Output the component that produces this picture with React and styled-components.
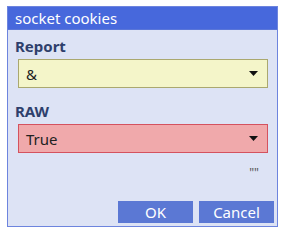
import React from 'react';
import styled, { createGlobalStyle } from 'styled-components';

const GlobalStyle = createGlobalStyle`
  html, body {
    margin: 0;
    padding: 0;
    background: #ffffff;
  }
  body {
    font-family: "Noto Sans", "Open Sans", sans-serif;
  }
`;

const Page = styled.div`
  width: 283px;
  height: 233px;
  padding: 6px 0 0 7px;
  box-sizing: border-box;
`;

const Dialog = styled.div`
  width: 271px;
  height: 221px;
  box-sizing: border-box;
  border: 1px solid #6d84de;
  background: #dde3f5;
  display: flex;
  flex-direction: column;
`;

const TitleBar = styled.div`
  height: 22px;
  background: #4768dc;
  color: #ffffff;
  font-size: 15px;
  line-height: 22px;
  padding-left: 7px;
  border-bottom: 1px solid #5a76d8;
`;

const Body = styled.div`
  flex: 1;
  display: flex;
  flex-direction: column;
  padding: 6px 9px 3px 10px;
`;

const Label = styled.div`
  font-size: 15px;
  font-weight: 700;
  color: #2e3f6c;
  line-height: 20px;
  margin-left: -3px;
  margin-bottom: 3px;
`;

const Select = styled.div`
  height: 29px;
  box-sizing: border-box;
  display: flex;
  align-items: center;
  justify-content: space-between;
  padding: 0 9px 0 7px;
  font-size: 15px;
  color: #222222;
  background: ${(p) => p.bg};
  border: 1px solid ${(p) => p.line};
  margin-bottom: ${(p) => p.gap}px;
`;

const Caret = () => (
  <svg width="9" height="5" viewBox="0 0 9 5">
    <path d="M0 0 H9 L4.5 5 Z" fill="#111111" />
  </svg>
);

const Quotes = styled.div`
  align-self: flex-end;
  font-size: 12px;
  line-height: 12px;
  color: #555555;
  margin-right: 9px;
  margin-top: 14px;
`;

const Buttons = styled.div`
  margin-top: auto;
  display: flex;
  justify-content: flex-end;
  gap: 6px;
  margin-right: -6px;
`;

const Button = styled.button`
  width: 75px;
  height: 22px;
  border: none;
  padding: 0;
  background: #5b78d4;
  color: #ffffff;
  font-family: "Noto Sans", "Open Sans", sans-serif;
  font-size: 15px;
  line-height: 22px;
`;

export default function App() {
  return (
    <Page>
      <GlobalStyle />
      <Dialog>
        <TitleBar>socket cookies</TitleBar>
        <Body>
          <Label>Report</Label>
          <Select bg="#f4f5c9" line="#aaa86f" gap={13}>
            <span>&amp;</span>
            <Caret />
          </Select>
          <Label>RAW</Label>
          <Select bg="#f0a9ab" line="#d4525f" gap={0}>
            <span>True</span>
            <Caret />
          </Select>
          <Quotes>""</Quotes>
          <Buttons>
            <Button>OK</Button>
            <Button>Cancel</Button>
          </Buttons>
        </Body>
      </Dialog>
    </Page>
  );
}
